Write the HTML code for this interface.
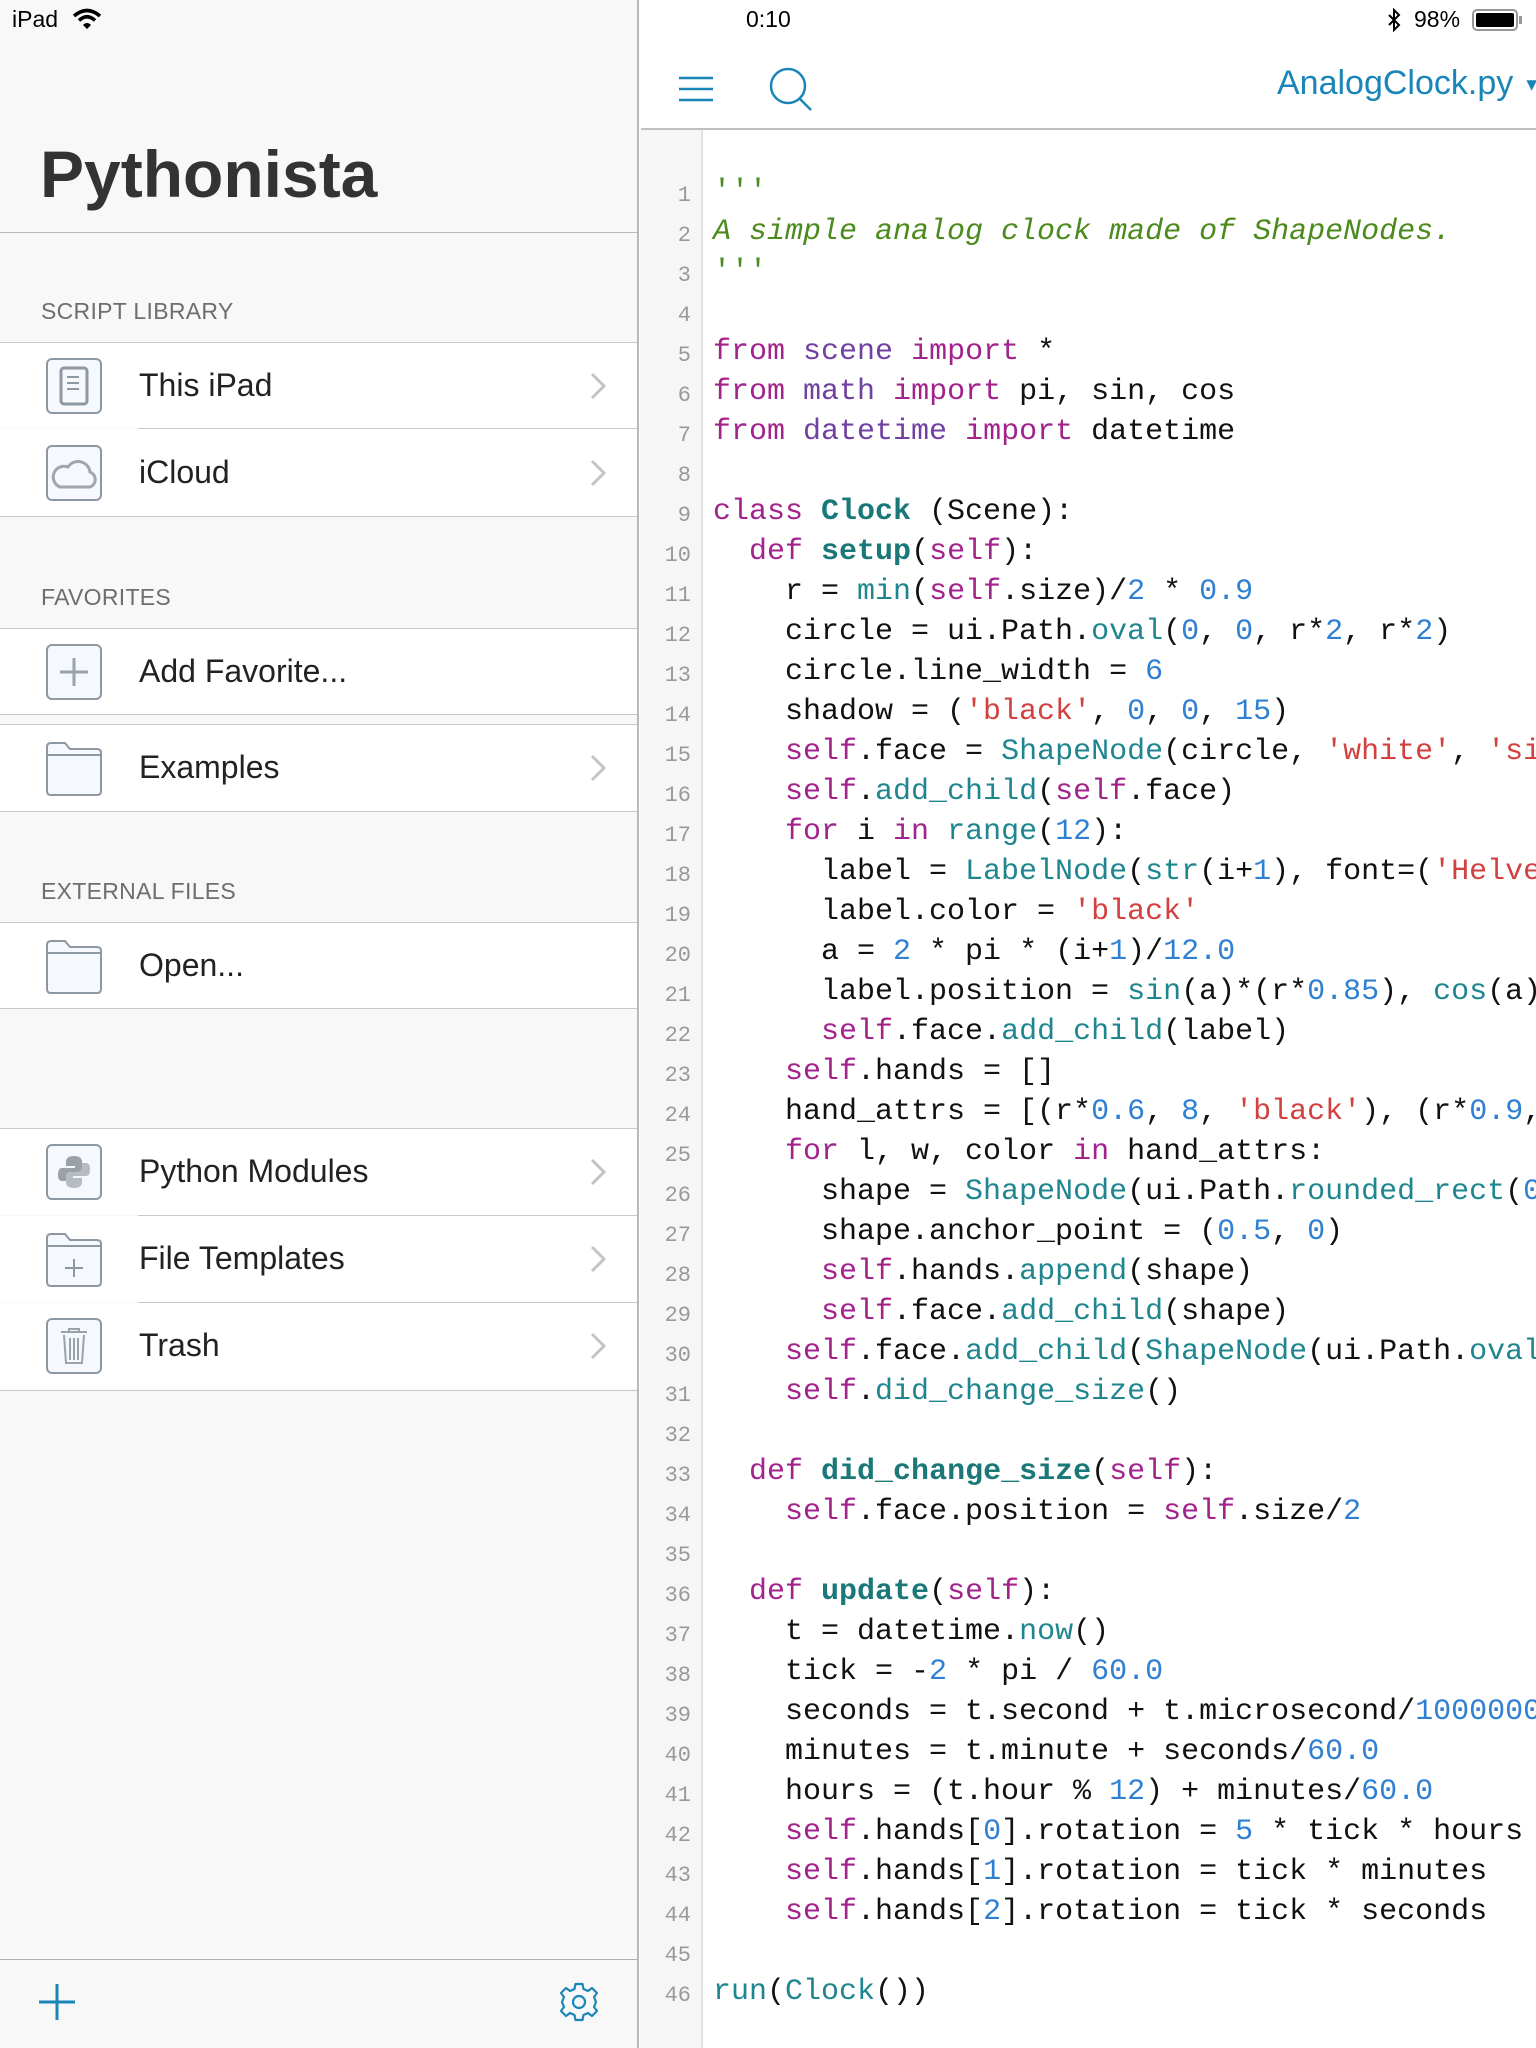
<!DOCTYPE html>
<html><head><meta charset="utf-8"><style>
*{margin:0;padding:0;box-sizing:border-box}
body{width:1536px;height:2048px;position:relative;overflow:hidden;background:#fff;font-family:"Liberation Sans",sans-serif}
#left{position:absolute;left:0;top:0;width:639px;height:2048px;background:#f8f8f8;border-right:2px solid #b8b8b8}
.a{position:absolute}
.hdr{position:absolute;left:41px;font-size:23px;color:#6d6d72;letter-spacing:0.3px}
.row{position:absolute;left:0;width:637px;background:#fff}
.row .t{position:absolute;left:139px;font-size:32px;color:#222;top:50%;transform:translateY(-52%)}
.row .ch{position:absolute;left:590px;top:50%;transform:translateY(-50%)}
.row .ic{position:absolute;left:46px;top:50%;transform:translateY(-50%)}
.ln{position:absolute;height:1px;background:#c8c7cc}
#code{position:absolute;left:640px;top:130px;width:896px;bottom:0;overflow:hidden}
#gut{position:absolute;left:0;top:0;width:63px;height:1920px;background:#f6f6f6;border-right:2px solid #e2e2e2}
.r{position:absolute;left:0;height:40px;width:896px;white-space:pre;font-family:"Liberation Mono",monospace;font-size:30px;line-height:40px;overflow:hidden}
.r .nn{position:absolute;left:0;width:51px;text-align:right;font-size:22px;color:#9a9a9a;top:4px}
.r .cc{position:absolute;left:73px;color:#111}
.k{color:#a3238d}.m{color:#7140a3}.b{color:#1f8690}.d{color:#1b7878;font-weight:bold}.n{color:#2f80d3}.s{color:#d2413f}
.r .c{color:#4b8a1c}
</style></head><body>
<div id="left">
<div class="a" style="left:12px;top:6px;font-size:23px;color:#000">iPad</div>
<svg class="a" style="left:72px;top:8px" width="30" height="22" viewBox="0 0 30 22"><path d="M2 8 Q15 -3 28 8" stroke="#000" stroke-width="3.5" fill="none"/><path d="M7 12.5 Q15 5 23 12.5" stroke="#000" stroke-width="3.5" fill="none"/><path d="M11 17 L15 21 L19 17 Q15 13 11 17Z" fill="#000"/></svg>
<div class="a" style="left:40px;top:136px;font-size:66px;font-weight:bold;color:#333">Pythonista</div>
<div class="ln" style="left:0;top:232px;width:637px;background:#b8b8b8"></div>

<div class="hdr" style="top:298px">SCRIPT LIBRARY</div>
<div class="ln" style="left:0;top:342px;width:637px"></div>
<div class="row" style="top:343px;height:85px"><svg class="ic" width="56" height="56"><rect x="1" y="1" width="54" height="54" rx="5" fill="#f5f8fc" stroke="#8e98a3" stroke-width="2"/><rect x="15" y="10" width="26" height="36" rx="3" fill="none" stroke="#8e98a3" stroke-width="3"/><path d="M21 19h12M21 25h12M21 31h12" stroke="#8e98a3" stroke-width="2"/></svg><div class="t">This iPad</div><svg class="ch" width="16" height="28"><path d="M2 2 L14 14 L2 26" stroke="#c4c4c8" stroke-width="3" fill="none"/></svg></div>
<div class="ln" style="left:138px;top:428px;width:499px"></div>
<div class="row" style="top:429px;height:87px"><svg class="ic" width="56" height="56"><rect x="1" y="1" width="54" height="54" rx="5" fill="#f5f8fc" stroke="#8e98a3" stroke-width="2"/><path d="M14 42 H44 A8 8 0 0 0 44 27 A12 12 0 0 0 22 22 A9 9 0 0 0 14 42Z" fill="none" stroke="#a0a6ad" stroke-width="3"/></svg><div class="t">iCloud</div><svg class="ch" width="16" height="28"><path d="M2 2 L14 14 L2 26" stroke="#c4c4c8" stroke-width="3" fill="none"/></svg></div>
<div class="ln" style="left:0;top:516px;width:637px"></div>

<div class="hdr" style="top:584px">FAVORITES</div>
<div class="ln" style="left:0;top:628px;width:637px"></div>
<div class="row" style="top:629px;height:85px"><svg class="ic" width="56" height="56"><rect x="1" y="1" width="54" height="54" rx="5" fill="#f5f8fc" stroke="#8e98a3" stroke-width="2"/><path d="M28 14v28M14 28h28" stroke="#9aa2ab" stroke-width="3"/></svg><div class="t">Add Favorite...</div></div>
<div class="ln" style="left:0;top:714px;width:637px"></div>
<div class="ln" style="left:0;top:724px;width:637px"></div>
<div class="row" style="top:725px;height:86px"><svg class="ic" width="56" height="56"><path d="M1 7 Q1 3 5 3 H19 L24 9 H51 Q55 9 55 13 V51 Q55 55 51 55 H5 Q1 55 1 51Z" fill="#f5f8fc" stroke="#8e98a3" stroke-width="2"/><path d="M1 15 H55" stroke="#8e98a3" stroke-width="2"/></svg><div class="t">Examples</div><svg class="ch" width="16" height="28"><path d="M2 2 L14 14 L2 26" stroke="#c4c4c8" stroke-width="3" fill="none"/></svg></div>
<div class="ln" style="left:0;top:811px;width:637px"></div>

<div class="hdr" style="top:878px">EXTERNAL FILES</div>
<div class="ln" style="left:0;top:922px;width:637px"></div>
<div class="row" style="top:923px;height:85px"><svg class="ic" width="56" height="56"><path d="M1 7 Q1 3 5 3 H19 L24 9 H51 Q55 9 55 13 V51 Q55 55 51 55 H5 Q1 55 1 51Z" fill="#f5f8fc" stroke="#8e98a3" stroke-width="2"/><path d="M1 15 H55" stroke="#8e98a3" stroke-width="2"/></svg><div class="t">Open...</div></div>
<div class="ln" style="left:0;top:1008px;width:637px"></div>

<div class="ln" style="left:0;top:1128px;width:637px"></div>
<div class="row" style="top:1129px;height:86px"><svg class="ic" width="56" height="56"><rect x="1" y="1" width="54" height="54" rx="5" fill="#f5f8fc" stroke="#8e98a3" stroke-width="2"/><path d="M28 12 Q20 12 20 18 V22 H29 V24 H16 Q12 24 12 31 Q12 37 16 37 H20 V32 Q20 28 25 28 H31 Q36 28 36 24 V18 Q36 12 28 12Z" fill="#9aa1a8"/><path d="M28 44 Q36 44 36 38 V34 H27 V32 H40 Q44 32 44 25 Q44 19 40 19 H36 V24 Q36 28 31 28 H25 Q20 28 20 32 V38 Q20 44 28 44Z" fill="#b6bcc2"/></svg><div class="t">Python Modules</div><svg class="ch" width="16" height="28"><path d="M2 2 L14 14 L2 26" stroke="#c4c4c8" stroke-width="3" fill="none"/></svg></div>
<div class="ln" style="left:138px;top:1215px;width:499px"></div>
<div class="row" style="top:1216px;height:86px"><svg class="ic" width="56" height="56"><path d="M1 7 Q1 3 5 3 H19 L24 9 H51 Q55 9 55 13 V51 Q55 55 51 55 H5 Q1 55 1 51Z" fill="#f5f8fc" stroke="#8e98a3" stroke-width="2"/><path d="M1 15 H55" stroke="#8e98a3" stroke-width="2"/><path d="M28 28v18M19 37h18" stroke="#8e98a3" stroke-width="2"/></svg><div class="t">File Templates</div><svg class="ch" width="16" height="28"><path d="M2 2 L14 14 L2 26" stroke="#c4c4c8" stroke-width="3" fill="none"/></svg></div>
<div class="ln" style="left:138px;top:1302px;width:499px"></div>
<div class="row" style="top:1303px;height:86px"><svg class="ic" width="56" height="56"><rect x="1" y="1" width="54" height="54" rx="5" fill="#f5f8fc" stroke="#8e98a3" stroke-width="2"/><path d="M15 14h26M23 14v-3h10v3M18 17l2 28h16l2-28M24 20v22M28 20v22M32 20v22" stroke="#9aa2ab" stroke-width="2" fill="none"/></svg><div class="t">Trash</div><svg class="ch" width="16" height="28"><path d="M2 2 L14 14 L2 26" stroke="#c4c4c8" stroke-width="3" fill="none"/></svg></div>
<div class="ln" style="left:0;top:1390px;width:637px"></div>

<div class="ln" style="left:0;top:1959px;width:637px;background:#b0b0b0"></div>
<svg class="a" style="left:39px;top:1984px" width="36" height="36"><path d="M18 0v36M0 18h36" stroke="#1a86b8" stroke-width="3"/></svg>
<svg class="a" style="left:559px;top:1982px" width="40" height="40" viewBox="-20 -20 40 40"><path fill="none" stroke="#1a86b8" stroke-width="2.2" d="M-3.5 -18 L3.5 -18 L4.5 -13 L9 -11 L13 -14 L18 -9 L15 -5 L17 0 L15 5 L18 9 L13 14 L9 11 L4.5 13 L3.5 18 L-3.5 18 L-4.5 13 L-9 11 L-13 14 L-18 9 L-15 5 L-17 0 L-15 -5 L-18 -9 L-13 -14 L-9 -11 L-4.5 -13Z" stroke-linejoin="round"/><circle r="6" fill="none" stroke="#1a86b8" stroke-width="2.2"/></svg>
</div>

<div class="a" style="left:746px;top:6px;font-size:23px;color:#000">0:10</div>
<svg class="a" style="left:1386px;top:8px" width="16" height="24"><path d="M3 7 L13 17 L8 22 V2 L13 7 L3 17" stroke="#000" stroke-width="2" fill="none"/></svg>
<div class="a" style="left:1414px;top:6px;font-size:23px;color:#000">98%</div>
<div class="a" style="left:1472px;top:9px;width:46px;height:22px;border:2px solid #999;border-radius:5px;padding:2px"><div style="width:100%;height:100%;background:#000;border-radius:2px"></div></div>
<div class="a" style="left:1519px;top:16px;width:3px;height:8px;background:#999"></div>

<svg class="a" style="left:679px;top:76px" width="34" height="26"><path d="M0 2h34M0 13h34M0 24h34" stroke="#1a86b8" stroke-width="2.5"/></svg>
<svg class="a" style="left:768px;top:66px" width="46" height="46"><circle cx="20" cy="20" r="17" fill="none" stroke="#1a86b8" stroke-width="2.5"/><path d="M31 32 L43 44" stroke="#1a86b8" stroke-width="2.5"/></svg>
<div class="a" style="left:1277px;top:64px;font-size:34px;color:#1a86b8;white-space:nowrap;width:259px;overflow:hidden">AnalogClock.py <span style="font-size:18px;vertical-align:middle">▼</span></div>
<div class="ln" style="left:641px;top:128px;width:895px;background:#c0c0c0;height:2px"></div>

<div id="code"><div id="gut"></div>
<div class="r" style="top:42px"><span class="nn">1</span><span class="cc c">'''</span></div>
<div class="r" style="top:82px"><span class="nn">2</span><span class="cc c" style="font-style:italic">A simple analog clock made of ShapeNodes.</span></div>
<div class="r" style="top:122px"><span class="nn">3</span><span class="cc c">'''</span></div>
<div class="r" style="top:162px"><span class="nn">4</span></div>
<div class="r" style="top:202px"><span class="nn">5</span><span class="cc"><span class="k">from</span> <span class="m">scene</span> <span class="k">import</span> *</span></div>
<div class="r" style="top:242px"><span class="nn">6</span><span class="cc"><span class="k">from</span> <span class="m">math</span> <span class="k">import</span> pi, sin, cos</span></div>
<div class="r" style="top:282px"><span class="nn">7</span><span class="cc"><span class="k">from</span> <span class="m">datetime</span> <span class="k">import</span> datetime</span></div>
<div class="r" style="top:322px"><span class="nn">8</span></div>
<div class="r" style="top:362px"><span class="nn">9</span><span class="cc"><span class="k">class</span> <span class="d">Clock</span> (Scene):</span></div>
<div class="r" style="top:402px"><span class="nn">10</span><span class="cc">  <span class="k">def</span> <span class="d">setup</span>(<span class="k">self</span>):</span></div>
<div class="r" style="top:442px"><span class="nn">11</span><span class="cc">    r = <span class="b">min</span>(<span class="k">self</span>.size)/<span class="n">2</span> * <span class="n">0.9</span></span></div>
<div class="r" style="top:482px"><span class="nn">12</span><span class="cc">    circle = ui.Path.<span class="b">oval</span>(<span class="n">0</span>, <span class="n">0</span>, r*<span class="n">2</span>, r*<span class="n">2</span>)</span></div>
<div class="r" style="top:522px"><span class="nn">13</span><span class="cc">    circle.line_width = <span class="n">6</span></span></div>
<div class="r" style="top:562px"><span class="nn">14</span><span class="cc">    shadow = (<span class="s">'black'</span>, <span class="n">0</span>, <span class="n">0</span>, <span class="n">15</span>)</span></div>
<div class="r" style="top:602px"><span class="nn">15</span><span class="cc">    <span class="k">self</span>.face = <span class="b">ShapeNode</span>(circle, <span class="s">'white'</span>, <span class="s">'si</span></span></div>
<div class="r" style="top:642px"><span class="nn">16</span><span class="cc">    <span class="k">self</span>.<span class="b">add_child</span>(<span class="k">self</span>.face)</span></div>
<div class="r" style="top:682px"><span class="nn">17</span><span class="cc">    <span class="k">for</span> i <span class="k">in</span> <span class="b">range</span>(<span class="n">12</span>):</span></div>
<div class="r" style="top:722px"><span class="nn">18</span><span class="cc">      label = <span class="b">LabelNode</span>(<span class="b">str</span>(i+<span class="n">1</span>), font=(<span class="s">'Helve</span></span></div>
<div class="r" style="top:762px"><span class="nn">19</span><span class="cc">      label.color = <span class="s">'black'</span></span></div>
<div class="r" style="top:802px"><span class="nn">20</span><span class="cc">      a = <span class="n">2</span> * pi * (i+<span class="n">1</span>)/<span class="n">12.0</span></span></div>
<div class="r" style="top:842px"><span class="nn">21</span><span class="cc">      label.position = <span class="b">sin</span>(a)*(r*<span class="n">0.85</span>), <span class="b">cos</span>(a)</span></div>
<div class="r" style="top:882px"><span class="nn">22</span><span class="cc">      <span class="k">self</span>.face.<span class="b">add_child</span>(label)</span></div>
<div class="r" style="top:922px"><span class="nn">23</span><span class="cc">    <span class="k">self</span>.hands = []</span></div>
<div class="r" style="top:962px"><span class="nn">24</span><span class="cc">    hand_attrs = [(r*<span class="n">0.6</span>, <span class="n">8</span>, <span class="s">'black'</span>), (r*<span class="n">0.9</span>,</span></div>
<div class="r" style="top:1002px"><span class="nn">25</span><span class="cc">    <span class="k">for</span> l, w, color <span class="k">in</span> hand_attrs:</span></div>
<div class="r" style="top:1042px"><span class="nn">26</span><span class="cc">      shape = <span class="b">ShapeNode</span>(ui.Path.<span class="b">rounded_rect</span>(<span class="n">0</span></span></div>
<div class="r" style="top:1082px"><span class="nn">27</span><span class="cc">      shape.anchor_point = (<span class="n">0.5</span>, <span class="n">0</span>)</span></div>
<div class="r" style="top:1122px"><span class="nn">28</span><span class="cc">      <span class="k">self</span>.hands.<span class="b">append</span>(shape)</span></div>
<div class="r" style="top:1162px"><span class="nn">29</span><span class="cc">      <span class="k">self</span>.face.<span class="b">add_child</span>(shape)</span></div>
<div class="r" style="top:1202px"><span class="nn">30</span><span class="cc">    <span class="k">self</span>.face.<span class="b">add_child</span>(<span class="b">ShapeNode</span>(ui.Path.<span class="b">oval</span></span></div>
<div class="r" style="top:1242px"><span class="nn">31</span><span class="cc">    <span class="k">self</span>.<span class="b">did_change_size</span>()</span></div>
<div class="r" style="top:1282px"><span class="nn">32</span></div>
<div class="r" style="top:1322px"><span class="nn">33</span><span class="cc">  <span class="k">def</span> <span class="d">did_change_size</span>(<span class="k">self</span>):</span></div>
<div class="r" style="top:1362px"><span class="nn">34</span><span class="cc">    <span class="k">self</span>.face.position = <span class="k">self</span>.size/<span class="n">2</span></span></div>
<div class="r" style="top:1402px"><span class="nn">35</span></div>
<div class="r" style="top:1442px"><span class="nn">36</span><span class="cc">  <span class="k">def</span> <span class="d">update</span>(<span class="k">self</span>):</span></div>
<div class="r" style="top:1482px"><span class="nn">37</span><span class="cc">    t = datetime.<span class="b">now</span>()</span></div>
<div class="r" style="top:1522px"><span class="nn">38</span><span class="cc">    tick = -<span class="n">2</span> * pi / <span class="n">60.0</span></span></div>
<div class="r" style="top:1562px"><span class="nn">39</span><span class="cc">    seconds = t.second + t.microsecond/<span class="n">1000000</span></span></div>
<div class="r" style="top:1602px"><span class="nn">40</span><span class="cc">    minutes = t.minute + seconds/<span class="n">60.0</span></span></div>
<div class="r" style="top:1642px"><span class="nn">41</span><span class="cc">    hours = (t.hour % <span class="n">12</span>) + minutes/<span class="n">60.0</span></span></div>
<div class="r" style="top:1682px"><span class="nn">42</span><span class="cc">    <span class="k">self</span>.hands[<span class="n">0</span>].rotation = <span class="n">5</span> * tick * hours</span></div>
<div class="r" style="top:1722px"><span class="nn">43</span><span class="cc">    <span class="k">self</span>.hands[<span class="n">1</span>].rotation = tick * minutes</span></div>
<div class="r" style="top:1762px"><span class="nn">44</span><span class="cc">    <span class="k">self</span>.hands[<span class="n">2</span>].rotation = tick * seconds</span></div>
<div class="r" style="top:1802px"><span class="nn">45</span></div>
<div class="r" style="top:1842px"><span class="nn">46</span><span class="cc"><span class="b">run</span>(<span class="b">Clock</span>())</span></div>
</div>
</body></html>
